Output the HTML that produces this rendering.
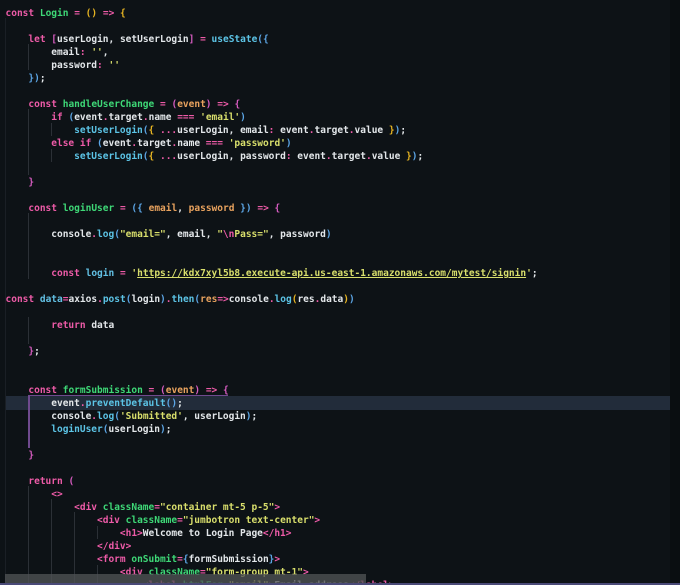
<!DOCTYPE html>
<html>
<head>
<meta charset="utf-8">
<style>
html,body{margin:0;padding:0;background:#0d1216;}
#r{position:relative;width:680px;height:585px;overflow:hidden;background:#0d1216;}
#side{position:absolute;left:670px;top:0;width:10px;height:585px;background:#0a0e11;}
#hl{position:absolute;left:5px;top:396px;width:665px;height:14px;background:#222c3a;}
.g{position:absolute;width:1px;background:#2b3036;}
.a{background:#6f4a8e;width:1.5px;}
pre{position:absolute;left:5.5px;top:7px;margin:0;font:bold 9.5px/13px "DejaVu Sans Mono","Liberation Mono",monospace;color:#e3e7ea;filter:blur(.3px);}
.k{color:#ee5ba8}.f{color:#3ed877}.t{color:#5cc4e6}.y{color:#e6b422}.p{color:#d65cc0}.b{color:#5ca6e6}
.o{color:#e8a25e}.s{color:#d9df6c}.u{color:#d9df6c;text-decoration:underline;}
.v{color:#62c0e4}
#ov{position:absolute;left:5px;top:574px;width:361px;height:11px;background:rgba(80,82,85,.78);}
#bar{position:absolute;left:0;top:583px;width:680px;height:2px;background:#4a4a78;}
</style>
</head>
<body>
<div id="r">
<div id="side"></div>
<div id="hl"></div>
<div class="g" style="left:5px;top:18px;height:567px;background:#1a1f25"></div>
<div class="g" style="left:28px;top:44px;height:26px"></div>
<div class="g" style="left:28px;top:109px;height:66px"></div>
<div class="g" style="left:28px;top:213px;height:66px"></div>
<div class="g" style="left:28px;top:317px;height:27px"></div>
<div class="g a" style="left:28px;top:395px;height:53px"></div>
<div class="g" style="left:28px;top:486px;height:99px"></div>
<div class="g" style="left:51px;top:123px;height:13px"></div>
<div class="g" style="left:51px;top:149px;height:13px"></div>
<div class="g" style="left:51px;top:499px;height:86px"></div>
<div class="g" style="left:74px;top:512px;height:73px"></div>
<div class="g" style="left:97px;top:526px;height:13px"></div>
<div class="g" style="left:97px;top:565px;height:20px"></div>
<div style="position:absolute;left:28px;top:395px;width:200px;height:1px;background:#6f4a8e"></div>
<pre><span class="k">const</span> <span class="f">Login</span> <span class="k">=</span> <span class="y">()</span> <span class="k">=&gt;</span> <span class="y">{</span>

    <span class="k">let</span> <span class="p">[</span>userLogin, setUserLogin<span class="p">]</span> <span class="k">=</span> <span class="t">useState</span><span class="b">({</span>
        email<span class="k">:</span> <span class="s">''</span>,
        password<span class="k">:</span> <span class="s">''</span>
    <span class="b">})</span>;

    <span class="k">const</span> <span class="f">handleUserChange</span> <span class="k">=</span> <span class="p">(</span><span class="o">event</span><span class="p">)</span> <span class="k">=&gt;</span> <span class="p">{</span>
        <span class="k">if</span> <span class="b">(</span>event<span class="k">.</span>target<span class="k">.</span>name <span class="k">===</span> <span class="s">'email'</span><span class="b">)</span>
            <span class="t">setUserLogin</span><span class="b">(</span><span class="y">{</span> <span class="k">...</span>userLogin, email<span class="k">:</span> event<span class="k">.</span>target<span class="k">.</span>value <span class="y">}</span><span class="b">)</span>;
        <span class="k">else if</span> <span class="b">(</span>event<span class="k">.</span>target<span class="k">.</span>name <span class="k">===</span> <span class="s">'password'</span><span class="b">)</span>
            <span class="t">setUserLogin</span><span class="b">(</span><span class="y">{</span> <span class="k">...</span>userLogin, password<span class="k">:</span> event<span class="k">.</span>target<span class="k">.</span>value <span class="y">}</span><span class="b">)</span>;

    <span class="p">}</span>

    <span class="k">const</span> <span class="f">loginUser</span> <span class="k">=</span> <span class="b">({</span> <span class="o">email</span>, <span class="o">password</span> <span class="b">})</span> <span class="k">=&gt;</span> <span class="p">{</span>

        console<span class="k">.</span><span class="t">log</span><span class="b">(</span><span class="s">"email="</span>, email, <span class="s">"</span><span class="k">\n</span><span class="s">Pass="</span>, password<span class="b">)</span>


        <span class="k">const</span> <span class="v">login</span> <span class="k">=</span> <span class="s">'</span><span class="u">https://kdx7xyl5b8.execute-api.us-east-1.amazonaws.com/mytest/signin</span><span class="s">'</span>;

<span class="k">const</span> <span class="v">data</span><span class="k">=</span>axios<span class="k">.</span><span class="t">post</span><span class="b">(</span>login<span class="b">)</span><span class="k">.</span><span class="t">then</span><span class="b">(</span><span class="o">res</span><span class="k">=&gt;</span>console<span class="k">.</span><span class="t">log</span><span class="y">(</span>res<span class="k">.</span>data<span class="y">)</span><span class="b">)</span>

        <span class="k">return</span> data

    <span class="p">}</span>;


    <span class="k">const</span> <span class="f">formSubmission</span> <span class="k">=</span> <span class="p">(</span><span class="o">event</span><span class="p">)</span> <span class="k">=&gt;</span> <span class="p">{</span>
        event<span class="k">.</span><span class="t">preventDefault</span><span class="b">()</span>;
        console<span class="k">.</span><span class="t">log</span><span class="b">(</span><span class="s">'Submitted'</span>, userLogin<span class="b">)</span>;
        <span class="t">loginUser</span><span class="b">(</span>userLogin<span class="b">)</span>;

    <span class="p">}</span>

    <span class="k">return</span> <span class="p">(</span>
        <span class="k">&lt;&gt;</span>
            <span class="k">&lt;div</span> <span class="f">className</span><span class="k">=</span><span class="s">"container mt-5 p-5"</span><span class="k">&gt;</span>
                <span class="k">&lt;div</span> <span class="f">className</span><span class="k">=</span><span class="s">"jumbotron text-center"</span><span class="k">&gt;</span>
                    <span class="k">&lt;h1&gt;</span>Welcome to Login Page<span class="k">&lt;/h1&gt;</span>
                <span class="k">&lt;/div&gt;</span>
                <span class="k">&lt;form</span> <span class="f">onSubmit</span><span class="k">=</span><span class="b">{</span>formSubmission<span class="b">}</span><span class="k">&gt;</span>
                    <span class="k">&lt;div</span> <span class="f">className</span><span class="k">=</span><span class="s">"form-group mt-1"</span><span class="k">&gt;</span>
                        <span class="k">&lt;label</span> <span class="f">htmlFor</span><span class="k">=</span><span class="s">"email"</span><span class="k">&gt;</span>Email address<span class="k">&lt;/label&gt;</span></pre>
<div id="ov"></div>
<div id="bar"></div>
</div>
</body>
</html>
